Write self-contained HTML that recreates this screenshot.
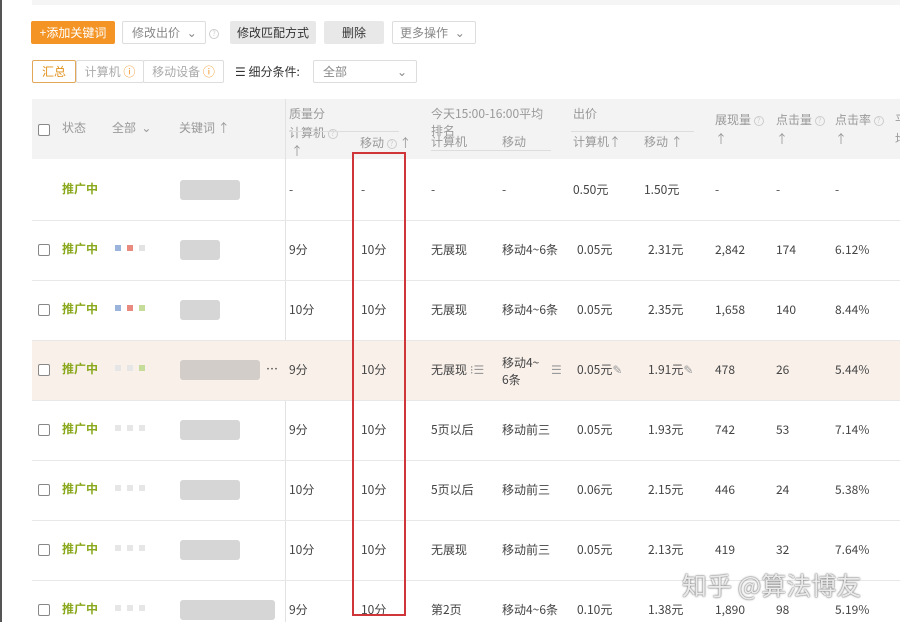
<!DOCTYPE html>
<html><head><meta charset="utf-8"><style>
*{margin:0;padding:0;box-sizing:border-box}
body{width:900px;height:622px;overflow:hidden;background:#fff;font-family:"Noto Sans CJK SC","Liberation Sans",sans-serif;font-size:12px;color:#444;position:relative}
.a{position:absolute;white-space:nowrap;line-height:14px}
.btn{position:absolute;height:23px;line-height:21px;border:1px solid #ddd;border-radius:2px;text-align:center;color:#888;font-size:12px;background:#fff}
.g{color:#999}
.cb{position:absolute;width:12px;height:12px;border:1px solid #888;border-radius:2px;background:#fff}
.st{position:absolute;color:#8aa81e;font-weight:bold;line-height:14px}
.sq{position:absolute;width:6px;height:6px}
.blur{position:absolute;background:#d6d6d6;border-radius:3px}
.line{position:absolute;left:32px;width:868px;height:1px;background:#e8e8e8}
.q{display:inline-block;width:10px;height:10px;border:1px solid #ccc;border-radius:50%;font-size:7px;line-height:8px;text-align:center;color:#ccc;vertical-align:middle}
</style></head><body>
<div class="a" style="left:0;top:0;width:2px;height:622px;background:#555"></div>
<div class="a" style="left:32px;top:0;width:868px;height:5px;background:#f5f5f5"></div>

<div class="btn" style="left:31px;top:21px;width:84px;background:#f39425;border-color:#f39425;color:#fff">+添加关键词</div>
<div class="btn" style="left:122px;top:21px;width:84px;text-align:left;padding-left:9px">修改出价 <span style="margin-left:4px">⌄</span></div>
<div class="a" style="left:209px;top:26px"><span class="q">?</span></div>
<div class="btn" style="left:230px;top:21px;width:86px;background:#e8e8e8;border-color:#e8e8e8;color:#333">修改匹配方式</div>
<div class="btn" style="left:324px;top:21px;width:60px;background:#e8e8e8;border-color:#e8e8e8;color:#333">删除</div>
<div class="btn" style="left:392px;top:21px;width:84px;text-align:left;padding-left:7px">更多操作 <span style="margin-left:4px">⌄</span></div>

<div class="btn" style="left:32px;top:60px;width:44px;border-color:#e2a85a;color:#e0901a">汇总</div>
<div class="btn" style="left:76px;top:60px;width:68px;color:#aaa">计算机 <span style="color:#f39425">ⓘ</span></div>
<div class="btn" style="left:143px;top:60px;width:81px;color:#aaa">移动设备 <span style="color:#f39425">ⓘ</span></div>
<div class="a" style="left:235px;top:65px;color:#333">☰ 细分条件:</div>
<div class="btn" style="left:313px;top:60px;width:104px;text-align:left;padding-left:9px">全部<span style="position:absolute;right:9px">⌄</span></div>

<div class="a" style="left:32px;top:99px;width:868px;height:60px;background:#f3f3f3"></div>
<div class="a" style="left:285px;top:99px;width:1px;height:523px;background:#e2e2e2"></div>
<div class="cb" style="left:38px;top:124px"></div>
<div class="a g" style="left:62px;top:121px">状态</div>
<div class="a g" style="left:112px;top:121px">全部 &nbsp;⌄</div>
<div class="a g" style="left:179px;top:121px">关键词 ↑</div>
<div class="a g" style="left:289px;top:107px">质量分</div>
<div class="a g" style="left:289px;top:126px">计算机 <span class="q">?</span></div>
<div class="a g" style="left:291px;top:144px">↑</div>
<div class="a" style="left:289px;top:131px;width:110px;height:1px;background:#ddd"></div>
<div class="a g" style="left:360px;top:136px">移动 <span class="q">?</span> ↑</div>
<div class="a g" style="left:431px;top:107px">今天15:00-16:00平均</div>
<div class="a g" style="left:431px;top:124px">排名</div>
<div class="a g" style="left:431px;top:135px">计算机</div>
<div class="a g" style="left:502px;top:135px">移动</div>
<div class="a" style="left:431px;top:150px;width:120px;height:1px;background:#ddd"></div>
<div class="a g" style="left:573px;top:107px">出价</div>
<div class="a" style="left:571px;top:131px;width:123px;height:1px;background:#ddd"></div>
<div class="a g" style="left:573px;top:135px">计算机↑</div>
<div class="a g" style="left:644px;top:135px">移动 ↑</div>
<div class="a g" style="left:715px;top:113px">展现量 <span class="q">?</span></div>
<div class="a g" style="left:776px;top:113px">点击量 <span class="q">?</span></div>
<div class="a g" style="left:835px;top:113px">点击率 <span class="q">?</span></div>
<div class="a g" style="left:715px;top:132px">↑</div>
<div class="a g" style="left:776px;top:132px">↑</div>
<div class="a g" style="left:835px;top:132px">↑</div>
<div class="a g" style="left:895px;top:113px">平</div>
<div class="a g" style="left:895px;top:132px">均</div>

<div class="a" style="left:32px;top:341px;width:868px;height:59px;background:#f9f0ea"></div>

<div class="line" style="top:220px"></div>
<div class="line" style="top:280px"></div>
<div class="line" style="top:340px"></div>
<div class="line" style="top:400px"></div>
<div class="line" style="top:460px"></div>
<div class="line" style="top:520px"></div>
<div class="line" style="top:580px"></div>

<div class="st" style="left:62px;top:182px">推广中</div>
<div class="blur" style="left:180px;top:180px;width:60px;height:20px"></div>
<div class="a" style="left:289px;top:183px">-</div><div class="a" style="left:361px;top:183px">-</div><div class="a" style="left:431px;top:183px">-</div><div class="a" style="left:502px;top:183px">-</div>
<div class="a" style="left:573px;top:183px">0.50元</div><div class="a" style="left:644px;top:183px">1.50元</div>
<div class="a" style="left:715px;top:183px">-</div><div class="a" style="left:776px;top:183px">-</div><div class="a" style="left:835px;top:183px">-</div>

<div class="cb" style="left:38px;top:244px"></div><div class="st" style="left:62px;top:242px">推广中</div>
<div class="sq" style="left:115px;top:245px;background:#9ab4dc"></div><div class="sq" style="left:127px;top:245px;background:#e88a80"></div><div class="sq" style="left:139px;top:245px;background:#e3e3e3"></div>
<div class="blur" style="left:180px;top:240px;width:40px;height:20px"></div>
<div class="a" style="left:289px;top:243px">9分</div><div class="a" style="left:361px;top:243px">10分</div><div class="a" style="left:431px;top:243px">无展现</div><div class="a" style="left:502px;top:243px">移动4~6条</div><div class="a" style="left:577px;top:243px">0.05元</div><div class="a" style="left:648px;top:243px">2.31元</div><div class="a" style="left:715px;top:243px">2,842</div><div class="a" style="left:776px;top:243px">174</div><div class="a" style="left:835px;top:243px">6.12%</div>

<div class="cb" style="left:38px;top:304px"></div><div class="st" style="left:62px;top:302px">推广中</div>
<div class="sq" style="left:115px;top:305px;background:#9ab4dc"></div><div class="sq" style="left:127px;top:305px;background:#e88a80"></div><div class="sq" style="left:139px;top:305px;background:#c5dc9a"></div>
<div class="blur" style="left:180px;top:300px;width:40px;height:20px"></div>
<div class="a" style="left:289px;top:303px">10分</div><div class="a" style="left:361px;top:303px">10分</div><div class="a" style="left:431px;top:303px">无展现</div><div class="a" style="left:502px;top:303px">移动4~6条</div><div class="a" style="left:577px;top:303px">0.05元</div><div class="a" style="left:648px;top:303px">2.35元</div><div class="a" style="left:715px;top:303px">1,658</div><div class="a" style="left:776px;top:303px">140</div><div class="a" style="left:835px;top:303px">8.44%</div>

<div class="cb" style="left:38px;top:364px"></div><div class="st" style="left:62px;top:362px">推广中</div>
<div class="sq" style="left:115px;top:365px;background:#e6e6e6"></div><div class="sq" style="left:127px;top:365px;background:#e6e6e6"></div><div class="sq" style="left:139px;top:365px;background:#c5dc9a"></div>
<div class="blur" style="left:180px;top:360px;width:80px;height:20px;background:#d3cdca"></div>
<div class="a" style="left:266px;top:362px">…</div>
<div class="a" style="left:289px;top:363px">9分</div><div class="a" style="left:361px;top:363px">10分</div><div class="a" style="left:431px;top:363px">无展现 <span class="g">⁝☰</span></div><div class="a" style="left:502px;top:354px;line-height:17px">移动4~<br>6条</div><div class="a g" style="left:551px;top:363px">☰</div><div class="a" style="left:577px;top:363px">0.05元<span class="g">✎</span></div><div class="a" style="left:648px;top:363px">1.91元<span class="g">✎</span></div><div class="a" style="left:715px;top:363px">478</div><div class="a" style="left:776px;top:363px">26</div><div class="a" style="left:835px;top:363px">5.44%</div>

<div class="cb" style="left:38px;top:424px"></div><div class="st" style="left:62px;top:422px">推广中</div>
<div class="sq" style="left:115px;top:425px;background:#e6e6e6"></div><div class="sq" style="left:127px;top:425px;background:#e6e6e6"></div><div class="sq" style="left:139px;top:425px;background:#e6e6e6"></div>
<div class="blur" style="left:180px;top:420px;width:60px;height:20px"></div>
<div class="a" style="left:289px;top:423px">9分</div><div class="a" style="left:361px;top:423px">10分</div><div class="a" style="left:431px;top:423px">5页以后</div><div class="a" style="left:502px;top:423px">移动前三</div><div class="a" style="left:577px;top:423px">0.05元</div><div class="a" style="left:648px;top:423px">1.93元</div><div class="a" style="left:715px;top:423px">742</div><div class="a" style="left:776px;top:423px">53</div><div class="a" style="left:835px;top:423px">7.14%</div>

<div class="cb" style="left:38px;top:484px"></div><div class="st" style="left:62px;top:482px">推广中</div>
<div class="sq" style="left:115px;top:485px;background:#e6e6e6"></div><div class="sq" style="left:127px;top:485px;background:#e6e6e6"></div><div class="sq" style="left:139px;top:485px;background:#e6e6e6"></div>
<div class="blur" style="left:180px;top:480px;width:60px;height:20px"></div>
<div class="a" style="left:289px;top:483px">10分</div><div class="a" style="left:361px;top:483px">10分</div><div class="a" style="left:431px;top:483px">5页以后</div><div class="a" style="left:502px;top:483px">移动前三</div><div class="a" style="left:577px;top:483px">0.06元</div><div class="a" style="left:648px;top:483px">2.15元</div><div class="a" style="left:715px;top:483px">446</div><div class="a" style="left:776px;top:483px">24</div><div class="a" style="left:835px;top:483px">5.38%</div>

<div class="cb" style="left:38px;top:544px"></div><div class="st" style="left:62px;top:542px">推广中</div>
<div class="sq" style="left:115px;top:545px;background:#e6e6e6"></div><div class="sq" style="left:127px;top:545px;background:#e6e6e6"></div><div class="sq" style="left:139px;top:545px;background:#e6e6e6"></div>
<div class="blur" style="left:180px;top:540px;width:60px;height:20px"></div>
<div class="a" style="left:289px;top:543px">10分</div><div class="a" style="left:361px;top:543px">10分</div><div class="a" style="left:431px;top:543px">无展现</div><div class="a" style="left:502px;top:543px">移动前三</div><div class="a" style="left:577px;top:543px">0.05元</div><div class="a" style="left:648px;top:543px">2.13元</div><div class="a" style="left:715px;top:543px">419</div><div class="a" style="left:776px;top:543px">32</div><div class="a" style="left:835px;top:543px">7.64%</div>

<div class="cb" style="left:38px;top:604px"></div><div class="st" style="left:62px;top:602px">推广中</div>
<div class="sq" style="left:115px;top:605px;background:#e6e6e6"></div><div class="sq" style="left:127px;top:605px;background:#e6e6e6"></div><div class="sq" style="left:139px;top:605px;background:#e6e6e6"></div>
<div class="blur" style="left:180px;top:600px;width:95px;height:20px"></div>
<div class="a" style="left:289px;top:603px">9分</div><div class="a" style="left:361px;top:603px">10分</div><div class="a" style="left:431px;top:603px">第2页</div><div class="a" style="left:502px;top:603px">移动4~6条</div><div class="a" style="left:577px;top:603px">0.10元</div><div class="a" style="left:648px;top:603px">1.38元</div><div class="a" style="left:715px;top:603px">1,890</div><div class="a" style="left:776px;top:603px">98</div><div class="a" style="left:835px;top:603px">5.19%</div>

<div class="a" style="left:352px;top:152px;width:54px;height:464px;border:2px solid #d0353a"></div>

<div class="a" style="left:682px;top:570px;line-height:30px;font-size:25px;color:rgba(255,255,255,0.85);text-shadow:0 0 2px #777,0 0 1px #555">知乎 @算法博友</div>
</body></html>
